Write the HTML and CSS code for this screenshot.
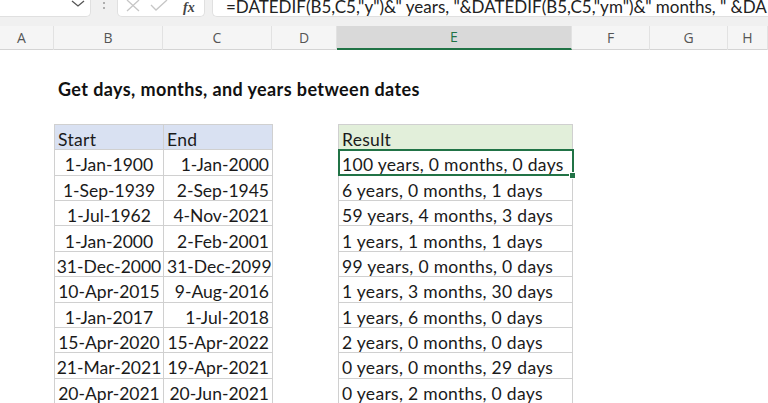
FILE: index.html
```html
<!DOCTYPE html>
<html lang="en">
<head>
    <meta charset="UTF-8">
    <title>DATEDIF years months days</title>
    <link rel="stylesheet" href="styles.css">
</head>
<body>
    <div class="formula-bar">
        <div class="name-box">
            <svg class="chevron" width="14" height="8" viewBox="0 0 14 8"><path d="M1 1 L7 6 L13 1" fill="none" stroke="#555" stroke-width="1.3"/></svg>
        </div>
        <svg class="dots" width="26" height="14" viewBox="0 0 26 14"><circle cx="13" cy="3" r="1" fill="#999"/><circle cx="13" cy="8" r="1" fill="#999"/></svg>
        <div class="fx-box">
            <svg width="16" height="14" viewBox="0 0 16 14"><path d="M2 0 L14 11 M14 0 L2 11" stroke="#c6c6c6" stroke-width="1.3"/></svg>
            <svg width="18" height="14" viewBox="0 0 18 14"><path d="M1 5 L6 10 L17 0" fill="none" stroke="#c6c6c6" stroke-width="1.3"/></svg>
            <span class="fx">fx</span>
        </div>
        <div class="formula-input">=DATEDIF(B5,C5,"y")&amp;" years, "&amp;DATEDIF(B5,C5,"ym")&amp;" months, " &amp;DA</div>
    </div>

    <div class="col-heads">
        <div>A</div>
        <div>B</div>
        <div>C</div>
        <div>D</div>
        <div class="active">E</div>
        <div>F</div>
        <div>G</div>
        <div>H</div>
    </div>

    <div class="sheet">
        <div class="row-spacer"></div>
        <div class="title">Get days, months, and years between dates</div>
        <div class="row-spacer tall"></div>

        <div class="tables">
            <table class="dates">
                <tr><th>Start</th><th>End</th></tr>
                <tr><td>1-Jan-1900</td><td>1-Jan-2000</td></tr>
                <tr><td>1-Sep-1939</td><td>2-Sep-1945</td></tr>
                <tr><td>1-Jul-1962</td><td>4-Nov-2021</td></tr>
                <tr><td>1-Jan-2000</td><td>2-Feb-2001</td></tr>
                <tr><td>31-Dec-2000</td><td>31-Dec-2099</td></tr>
                <tr><td>10-Apr-2015</td><td>9-Aug-2016</td></tr>
                <tr><td>1-Jan-2017</td><td>1-Jul-2018</td></tr>
                <tr><td>15-Apr-2020</td><td>15-Apr-2022</td></tr>
                <tr><td>21-Mar-2021</td><td>19-Apr-2021</td></tr>
                <tr><td>20-Apr-2021</td><td>20-Jun-2021</td></tr>
            </table>

            <table class="results">
                <tr><th>Result</th></tr>
                <tr><td class="selected">100 years, 0 months, 0 days<span class="handle"></span></td></tr>
                <tr><td>6 years, 0 months, 1 days</td></tr>
                <tr><td>59 years, 4 months, 3 days</td></tr>
                <tr><td>1 years, 1 months, 1 days</td></tr>
                <tr><td>99 years, 0 months, 0 days</td></tr>
                <tr><td>1 years, 3 months, 30 days</td></tr>
                <tr><td>1 years, 6 months, 0 days</td></tr>
                <tr><td>2 years, 0 months, 0 days</td></tr>
                <tr><td>0 years, 0 months, 29 days</td></tr>
                <tr><td>0 years, 2 months, 0 days</td></tr>
            </table>
        </div>
    </div>
</body>
</html>
```

FILE: styles.css
```css
* {
    margin: 0;
    padding: 0;
    box-sizing: border-box;
}
body {
    width: 768px;
    height: 403px;
    overflow: hidden;
    background-color: #fff;
    font-family: Lato, "Open Sans", sans-serif;
    color: #1a1a1a;
}

/* #region formula bar */
.formula-bar {
    height: 26px;
    background-color: #f0f0f0;
    display: flex;
    align-items: flex-start;
    overflow: hidden;
}
.name-box {
    width: 91px;
    height: 17px;
    background-color: #fff;
    border: 1px solid #e0e0e0;
    border-top: none;
    border-left: none;
    border-radius: 0 0 5px 0;
    display: flex;
    justify-content: flex-end;
    padding-right: 5px;
}
.dots {
    flex: none;
}
.fx-box {
    width: 88px;
    height: 17px;
    background-color: #fff;
    border: 1px solid #e0e0e0;
    border-top: none;
    border-radius: 0 0 5px 5px;
    display: flex;
    align-items: flex-start;
    gap: 9px;
    padding-left: 7px;
}
.fx {
    font-family: "Liberation Serif", serif;
    font-style: italic;
    font-weight: bold;
    font-size: 14px;
    line-height: 15px;
    color: #444;
    margin-left: 6px;
}
.formula-input {
    flex: 1;
    height: 17px;
    margin-left: 7px;
    background-color: #fff;
    border: 1px solid #e0e0e0;
    border-top: none;
    border-right: none;
    border-radius: 0 0 0 5px;
    padding-left: 13px;
    font-size: 17px;
    line-height: 13px;
    white-space: nowrap;
    overflow: hidden;
    color: #222;
}
/* #endregion formula bar */

.col-heads {
    height: 24px;
    display: grid;
    grid-template-columns: 54px 109px 109px 65px 235px 78px 78px 1fr;
    background-color: #f5f5f5;
    border-bottom: 1px solid #d4d4d4;
    font-family: "Open Sans", sans-serif;
    font-size: 14px;
    color: #555;
}
.col-heads div {
    text-align: center;
    line-height: 24px;
    border-right: 1px solid #e2e2e2;
}
.col-heads div:first-child {
    text-align: left;
    padding-left: 17px;
}
.col-heads .active {
    background-color: #d9d9d9;
    color: #217346;
    border-bottom: 2px solid #217346;
    line-height: 22px;
}

.row-spacer {
    height: 23px;
}
.row-spacer.tall {
    height: 25.4px;
}
.title {
    height: 25.4px;
    padding-left: 58px;
    padding-top: 5px;
    font-weight: bold;
    font-size: 18px;
    letter-spacing: 0.4px;
    color: #111;
    white-space: nowrap;
}

.tables {
    display: flex;
    align-items: flex-start;
    padding-left: 54px;
}
table {
    border-collapse: collapse;
    table-layout: fixed;
    font-size: 17.5px;
    letter-spacing: 0.3px;
}
th, td {
    height: 25.4px;
    border: 1px solid #d0d0d0;
    padding: 5px 3px 0 3px;
    white-space: nowrap;
    font-weight: normal;
    text-align: left;
    line-height: 19px;
}
.dates {
    width: 218px;
}
.dates th, .dates td {
    width: 109px;
}
.dates th {
    background-color: #d9e1f2;
}
.dates td:first-child {
    text-align: center;
    padding: 5px 0 0 0;
    letter-spacing: 0;
}
.dates td:last-child {
    text-align: right;
    padding-right: 3px;
    letter-spacing: 0;
}
.results {
    margin-left: 65px;
    width: 235px;
}
.results th {
    background-color: #e2efda;
}
.results td.selected {
    position: relative;
    outline: 2px solid #217346;
    outline-offset: -1px;
}
.handle {
    position: absolute;
    right: -4px;
    bottom: -4px;
    width: 7px;
    height: 7px;
    background-color: #217346;
    border: 1px solid #fff;
}
```
